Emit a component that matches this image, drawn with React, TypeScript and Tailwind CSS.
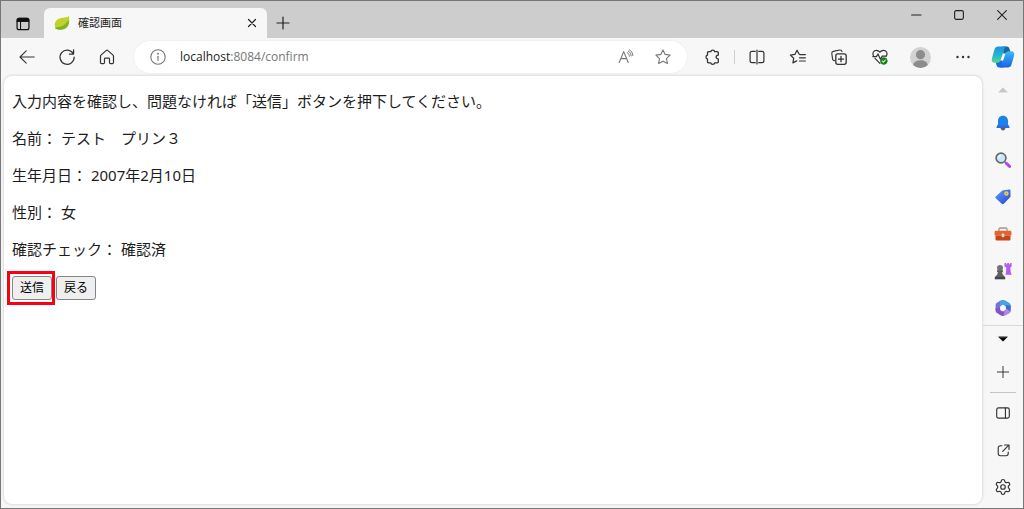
import type { ReactNode } from 'react';
import { Settings } from 'lucide-react';

interface IconProps {
    children: ReactNode;
    size?: string;
}

interface ToolButtonProps {
    label: string;
    children: ReactNode;
}

type Field = {
    label: string;
    value: string;
};

const FIELDS: Field[] = [
    { label: '名前', value: 'テスト　プリン３' },
    { label: '生年月日', value: '2007年2月10日' },
    { label: '性別', value: '女' },
    { label: '確認チェック', value: '確認済' },
];

function Icon({ children, size = 'size-4' }: IconProps) {
    return (
        <svg
            viewBox="0 0 16 16"
            className={`${size} shrink-0 overflow-visible`}
            fill="none"
            stroke="currentColor"
            strokeWidth="1.1"
            strokeLinecap="round"
            strokeLinejoin="round"
            aria-hidden="true"
        >
            {children}
        </svg>
    );
}

function NavButton({ label, children }: ToolButtonProps) {
    return (
        <button type="button" aria-label={label} className="flex h-8 w-10 shrink-0 items-center justify-center">
            {children}
        </button>
    );
}

function ToolButton({ label, children }: ToolButtonProps) {
    return (
        <button type="button" aria-label={label} className="flex h-8 w-[41px] shrink-0 items-center justify-center">
            {children}
        </button>
    );
}

function SideButton({ label, children }: ToolButtonProps) {
    return (
        <button type="button" aria-label={label} className="flex size-7 shrink-0 items-center justify-center">
            {children}
        </button>
    );
}

function WindowButton({ label, children }: ToolButtonProps) {
    return (
        <button type="button" aria-label={label} className="flex h-7 w-[43px] items-center justify-center text-[#222]">
            {children}
        </button>
    );
}

function LeafIcon() {
    return (
        <svg viewBox="0 0 16 16" className="size-4 shrink-0" aria-hidden="true">
            <path d="M14.9 1c-1.8 1.7-4.6 1.3-7.7 2C3 4 .4 6.9.8 10.5c.2 2 1.5 3.700 3.5 4 3 .5 7.800-.4 9.600-4 1.500-3 1.600-6.500 1-9.500z" fill="#bfd32a" />
            <path d="M15.200 5c.1 2.500-.4 5-2 7.100-2.100 2.700-6.300 3.200-9.400 2.300-1-.3-1.800-.8-2.300-1.500 5.500.2 10.700-2 13.700-7.900z" fill="#7fb42c" />
            <path d="M1 13.200c5.500-.2 10-2 13-7.200" fill="none" stroke="#5f9a22" strokeWidth=".7" />
        </svg>
    );
}

function TitleBar() {
    return (
        <header className="flex h-[37px] bg-[#cdcdcd]">
            <button type="button" aria-label="タブ操作メニュー" className="flex w-[43px] items-center justify-center pt-2 text-[#111]">
                <Icon size="size-[14px]">
                    <rect x="1.2" y="1.5" width="13.6" height="13" rx="2.2" strokeWidth="1.4" />
                    <path d="M1.5 3.6c0-1.300.8-2.100 2-2.100h9c1.200 0 2 .8 2 2v1.600h-13z" fill="currentColor" />
                    <path d="M5.2 5v9.3" strokeWidth="1.2" />
                </Icon>
            </button>
            <div className="mt-[7px] flex w-[223px] items-center rounded-t-md bg-[#f7f7f7] pr-[7px] pl-[10px]">
                <LeafIcon />
                <span className="ml-2 flex-1 truncate text-[11px] text-[#222]">確認画面</span>
                <button type="button" aria-label="タブを閉じる" className="flex size-4 items-center justify-center text-[#222]">
                    <Icon size="size-2">
                        <path d="m1 1 14 14M15 1 1 15" strokeWidth="2.4" />
                    </Icon>
                </button>
            </div>
            <button type="button" aria-label="新しいタブ" className="flex w-8 items-center justify-center pt-[7px] text-[#222]">
                <Icon size="size-3">
                    <path d="M8 0v16M0 8h16" strokeWidth="1.6" />
                </Icon>
            </button>
            <div className="ml-auto flex">
                <WindowButton label="最小化">
                    <Icon size="size-[10px]">
                        <path d="M1 8h15" strokeWidth="1.8" />
                    </Icon>
                </WindowButton>
                <WindowButton label="最大化">
                    <Icon size="size-[10px]">
                        <rect x="1" y="1" width="14" height="14" rx="2.5" strokeWidth="1.8" />
                    </Icon>
                </WindowButton>
                <WindowButton label="閉じる">
                    <Icon size="size-[10px]">
                        <path d="m1 1 14 14M15 1 1 15" strokeWidth="1.8" />
                    </Icon>
                </WindowButton>
            </div>
        </header>
    );
}

function AddressBar() {
    return (
        <div className="mr-[5px] ml-[7px] flex h-8 min-w-0 flex-1 items-center rounded-full bg-white px-4 text-[#767676] shadow-[0_0_2px_rgba(0,0,0,0.08)]">
            <Icon>
                <circle cx="8" cy="8" r="7.2" />
                <path d="M8 7.2v4.3" />
                <circle cx="8" cy="4.7" r=".4" fill="currentColor" />
            </Icon>
            <a href="#confirm" className="ml-[14px] flex-1 truncate font-['Open_Sans','Noto_Sans',sans-serif] text-[12px]">
                <span className="text-[#1b1b1b]">localhost</span>:8084/confirm
            </a>
            <div className="flex items-center gap-[21px]">
                <button type="button" aria-label="音声で読み上げる">
                    <Icon>
                        <path d="M1.2 13.500 5.700 2.600l4.500 10.900M2.900 9.600h5.600" />
                        <path d="M9.300 3.700c1.300.8 2 2 2.100 3.600M10.300 2.100c1.800 1.100 2.700 2.600 2.800 4.800M11.200.6c2.300 1.300 3.500 3.400 3.700 6" strokeWidth="1" />
                    </Icon>
                </button>
                <button type="button" aria-label="お気に入りに追加">
                    <Icon>
                        <path d="m8 .9 2.150 4.500 4.950.7-3.600 3.450.9 4.950L8 12.150 3.600 14.500l.9-4.950L.9 6.100l4.950-.7z" />
                    </Icon>
                </button>
            </div>
        </div>
    );
}

function CopilotIcon() {
    return (
        <svg viewBox="0 0 24 24" className="size-6 shrink-0" aria-hidden="true">
            <defs>
                <linearGradient id="copilotLeft" x1="0" y1="0" x2="0" y2="1">
                    <stop offset="0" stopColor="#1c93dc" />
                    <stop offset=".5" stopColor="#22b2d6" />
                    <stop offset="1" stopColor="#5bd889" />
                </linearGradient>
                <linearGradient id="copilotRight" x1="0" y1="0" x2="0" y2="1">
                    <stop offset="0" stopColor="#3cc0f5" />
                    <stop offset=".5" stopColor="#2b8bf2" />
                    <stop offset="1" stopColor="#1f62dc" />
                </linearGradient>
            </defs>
            <path d="M11.500 1.500h4.300c1.700 0 2.300 1 2.800 2.700L19.900 8.500h-7.600z" fill="#1d659f" />
            <path d="M4 15.500h7.700l.8 7H8.200c-1.700 0-2.300-1-2.800-2.700z" fill="#1c69e8" />
            <path d="M7.500 1.500h8c-1.400.4-2 1.700-2.600 3.700l-3.200 9.800c-.6 1.900-1.700 2.700-3.500 2.700H4.100c-3 0-3.900-2-3-5L3.400 4.800c.7-2.200 1.800-3.300 4.100-3.300z" fill="url(#copilotLeft)" />
            <path d="M16.500 22.500h-8c1.400-.4 2-1.700 2.600-3.700l3.200-9.800c.6-1.900 1.700-2.700 3.500-2.700h2.100c3 0 3.900 2 3 5l-2.300 7.900c-.7 2.200-1.800 3.300-4.100 3.300z" fill="url(#copilotRight)" />
        </svg>
    );
}

function Toolbar() {
    return (
        <nav aria-label="ツールバー" className="flex h-[38px] items-center bg-[#f7f7f7] pl-[6px] text-[#333]">
            <NavButton label="戻る">
                <Icon>
                    <path d="M15.200 8H1.200M7.200 1.800 1 8l6.200 6.200" />
                </Icon>
            </NavButton>
            <NavButton label="更新">
                <Icon>
                    <path d="M14.300 4.700A7.100 7.100 0 1 0 15.200 8M14.600.8v4.300h-4.300" strokeWidth="1.2" />
                </Icon>
            </NavButton>
            <NavButton label="ホーム">
                <Icon>
                    <path d="M1.500 7.300c0-.6.2-1 .7-1.400l4.900-4.300c.6-.5 1.200-.5 1.800 0l4.900 4.300c.5.400.7.800.7 1.400v6.300c0 .7-.4 1.100-1.100 1.100h-1.800c-.7 0-1.100-.4-1.100-1.100V10c0-.5-.3-.8-.8-.8H6.300c-.5 0-.8.3-.8.800v3.600c0 .7-.4 1.100-1.100 1.100H2.600c-.7 0-1.100-.4-1.100-1.100z" strokeWidth="1.2" />
                </Icon>
            </NavButton>
            <AddressBar />
            <ToolButton label="拡張機能">
                <Icon>
                    <path
                        d="M3.600 2.600h2.200c.3-2 3.600-2 3.900 0h2.500c.7 0 1.100.4 1.100 1.100v2.400c-2.900-.1-2.900 4 0 3.900v2.700c0 .7-.4 1.100-1.100 1.100H9.700c-.3 2-3.600 2-3.900 0H3.600c-.7 0-1.100-.4-1.100-1.100V10c-2-.3-2-3.600 0-3.900V3.700c0-.7.4-1.100 1.100-1.100z"
                        strokeWidth="1.3"
                    />
                </Icon>
            </ToolButton>
            <span className="mr-px ml-px h-[14px] w-px bg-[#cfcfcf]" />
            <ToolButton label="画面を分割する">
                <Icon>
                    <path d="M6.300 2.300H3c-1.200 0-1.900.7-1.900 1.900v7.600c0 1.200.7 1.900 1.900 1.900h3.300M9.700 2.300H13c1.200 0 1.900.7 1.900 1.900v7.600c0 1.200-.7 1.900-1.900 1.900H9.700M8 1v14" strokeWidth="1.2" />
                </Icon>
            </ToolButton>
            <ToolButton label="お気に入り">
                <Icon>
                    <path d="M9.400 5.100H9L7 1.200 4.900 5.400l-4.500.7 3.300 3.200-.8 4.600 3.800-2M9.900 5.600h5.500M9.500 8.800h5.900M9.500 12h5.900" strokeWidth="1.2" />
                </Icon>
            </ToolButton>
            <ToolButton label="コレクション">
                <Icon>
                    <path d="M3.500 11.600c-1.100 0-1.700-.5-1.900-1.500L.8 4.500c-.2-1.200.3-1.900 1.500-2.100L8.800 1c1.200-.2 1.900.3 2.200 1.700" />
                    <rect x="4.8" y="4.9" width="10.4" height="10.4" rx="2" strokeWidth="1.3" />
                    <path d="M10 7.500v5.200M7.400 10.100h5.200" strokeWidth="1.3" />
                </Icon>
            </ToolButton>
            <ToolButton label="ブラウザーのエッセンシャル">
                <Icon>
                    <path d="M1.500 7C-.2 4.200 1.800 1.200 4.500 1.300 6.100 1.400 7 2.100 7.900 3.200c.9-1.100 1.900-1.800 3.400-1.900 2.800-.1 4.900 2.900 3.100 5.700M3 9.400l4.900 4.900" strokeWidth="1.2" />
                    <path d="M.8 7.600h3.600L6 5l2.400 5.200 1.700-3h4" strokeWidth="1.2" />
                    <circle cx="11.8" cy="12" r="3.4" fill="#16831a" stroke="#16831a" strokeWidth=".6" />
                    <path d="m10.300 12.200 1.100 1 2-2.200" stroke="#d8f0d8" />
                </Icon>
            </ToolButton>
            <ToolButton label="プロファイル">
                <svg viewBox="0 0 22 22" className="size-[21px]" aria-hidden="true">
                    <circle cx="11" cy="11" r="11" fill="#d2d2d2" />
                    <circle cx="11" cy="8" r="4.8" fill="#8c8c8c" />
                    <path d="M3.300 18.800c.7-3.200 3.500-4.800 7.700-4.800s7 1.600 7.700 4.800A11 11 0 0 1 11 22a11 11 0 0 1-7.700-3.200z" fill="#8c8c8c" />
                </svg>
            </ToolButton>
            <ToolButton label="設定など">
                <Icon>
                    <path d="M3.500 8h.01M9 8h.01M14.500 8h.01" strokeWidth="2.4" />
                </Icon>
            </ToolButton>
            <ToolButton label="Copilot">
                <CopilotIcon />
            </ToolButton>
        </nav>
    );
}

function BellIcon() {
    return (
        <svg viewBox="0 0 16 16" className="size-4" aria-hidden="true">
            <path d="M5.500 13h5c-.3 1.600-1.200 2.400-2.500 2.400S5.800 14.600 5.500 13z" fill="#5b6068" />
            <path d="M8 .8C4.900.8 3 3 3 6v3.300L1.700 12c-.2.600 0 1 .6 1h11.400c.6 0 .8-.4.6-1L13 9.300V6C13 3 11.100.8 8 .8z" fill="#1a83ea" />
            <path d="M2.500 10.500h11l.8 1.500c.2.600 0 1-.6 1H2.300c-.6 0-.8-.4-.6-1z" fill="#2c67df" />
        </svg>
    );
}

function SearchIcon() {
    return (
        <svg viewBox="0 0 16 16" className="size-4" aria-hidden="true">
            <path d="m10 10 1.600 1.600" stroke="#777" strokeWidth="1.8" />
            <path d="m11.400 11.400 3.200 3" stroke="#b14be8" strokeWidth="3" strokeLinecap="round" />
            <circle cx="6" cy="6" r="4.9" fill="#c7e7fb" stroke="#6a6a6a" strokeWidth="1.7" />
            <path d="M3.500 5.600A3 3 0 0 1 6 3.300" fill="none" stroke="#fff" strokeWidth="1.2" />
        </svg>
    );
}

function TagIcon() {
    return (
        <svg viewBox="0 0 16 16" className="size-4" aria-hidden="true">
            <defs>
                <linearGradient id="tagFill" x1="0" y1="0" x2="1" y2="1">
                    <stop offset="0" stopColor="#5ba4f5" />
                    <stop offset="1" stopColor="#2b3fd6" />
                </linearGradient>
            </defs>
            <path d="M8.500 1.200 14 .5c1-.1 1.500.4 1.500 1.400v5c0 .7-.2 1.100-.7 1.600l-5.700 6c-.9.900-1.700.9-2.600 0L1 9.600C.1 8.700.1 8 1 7.200l5.800-5.300c.5-.4 1-.6 1.700-.7z" fill="url(#tagFill)" />
            <circle cx="11.4" cy="4.6" r="1.6" fill="#8ea69a" stroke="#f4cf48" strokeWidth="1.3" />
        </svg>
    );
}

function ToolboxIcon() {
    return (
        <svg viewBox="0 0 18 16" className="h-4 w-[18px]" aria-hidden="true">
            <path d="M5 5V3.200c0-.8.5-1.200 1.200-1.200h5.600c.7 0 1.200.4 1.200 1.200V5" fill="none" stroke="#9a9a9a" strokeWidth="1.3" />
            <rect x=".6" y="4.8" width="16.8" height="4.8" rx="1.2" fill="#e6652d" />
            <path d="M1.500 9.500h15v3.700c0 .8-.5 1.300-1.300 1.300H2.800c-.8 0-1.300-.5-1.300-1.300z" fill="#c8451a" />
            <rect x="7.7" y="7.5" width="2.6" height="3.7" rx=".8" fill="#dedede" />
        </svg>
    );
}

function GamesIcon() {
    return (
        <svg viewBox="0 0 18 18" className="size-[18px]" aria-hidden="true">
            <path d="M10.500 1h1.600v1.200h1.100V1h1.800v1.200h1.100V1h1.500v3.500l-1.300 1 .5 5.200 1 2.100h-6.500l.7-2.100.3-5.200-1.800-1z" fill="#b45cf0" />
            <circle cx="6" cy="6" r="3" fill="#747474" />
            <path d="M3 8.300h6V10H8.200c0 2.200.8 3.200 2.600 4.400v2.300H1.200v-2.300C3 13.200 3.800 12.200 3.800 10H3z" fill="#5f5f5f" />
            <path d="M.8 15h10.400v2.300H.8z" fill="#454545" />
        </svg>
    );
}

function OfficeIcon() {
    return (
        <svg viewBox="0 0 18 18" className="size-[18px]" aria-hidden="true">
            <path d="M6.300 1.800 9.800.9 12 4.900 8 6 5.800 8.900 5.500 12 1.600 11.500V6.300c0-1.200.4-1.900 1.400-2.500z" fill="#7471dc" />
            <path d="M9 .9c.8 0 1.400.2 2.200.7l3.800 2.200c1.200.7 1.700 1.500 1.700 2.800v3.200L11.900 8.700 9.200 6 6 6.900V3.200C6 1.800 7.500.9 9 .9z" fill="#43a5e6" />
            <path d="m11.800 6.200 4.900.4v5c0 1.100-.5 1.900-1.400 2.500l-3.700 2.200-2.300-3.900 2.700-2.600z" fill="#4169cf" />
            <path d="m12 9.600 4.500 2.800c-.2.700-.6 1.300-1.300 1.700l-4.100 2.400c-1.400.8-2.800.8-4.200 0L5 15.300 7.500 11.500l2.300.5z" fill="#b287e6" />
            <path d="M1.600 9.200 6 8.800l1 3.400 3.400.2-.7 4.300c-1 .2-1.900 0-2.800-.5l-3.900-2.300c-1-.6-1.400-1.300-1.400-2.500z" fill="#8354c8" />
            <path d="m9 5.800 2.800 1.600v3.200L9 12.200l-2.800-1.600V7.400z" fill="#f7f7f7" />
        </svg>
    );
}

function Sidebar() {
    return (
        <aside aria-label="サイドバー" className="flex w-10 shrink-0 flex-col items-center text-[#333]">
            <div className="flex flex-col items-center gap-[9px] pb-[3px]">
                <button type="button" aria-label="上へスクロール" className="-mb-1 flex h-7 items-center justify-center text-[#c6c6c6]">
                    <Icon size="size-[10px]">
                        <path d="m1.500 11 6.500-6.500 6.500 6.500z" fill="currentColor" />
                    </Icon>
                </button>
                <SideButton label="通知"><BellIcon /></SideButton>
                <SideButton label="検索"><SearchIcon /></SideButton>
                <SideButton label="ショッピング"><TagIcon /></SideButton>
                <SideButton label="ツール"><ToolboxIcon /></SideButton>
                <SideButton label="ゲーム"><GamesIcon /></SideButton>
                <SideButton label="Microsoft 365"><OfficeIcon /></SideButton>
            </div>
            <div className="flex w-full flex-col items-center border-t border-[#d8d8d8]">
                <button type="button" aria-label="下へスクロール" className="flex h-[26px] items-center justify-center text-black">
                    <Icon size="size-[10px]">
                        <path d="m1.500 5 6.500 6.500L14.500 5z" fill="currentColor" />
                    </Icon>
                </button>
                <button type="button" aria-label="カスタマイズ" className="flex h-10 items-center justify-center">
                    <Icon size="size-3">
                        <path d="M8 .5v15M.5 8h15" strokeWidth="1.3" />
                    </Icon>
                </button>
                <span className="h-px w-[26px] bg-[#c4c4c4]" />
            </div>
            <div className="mt-auto flex flex-col gap-[9px] pb-[7px]">
                <SideButton label="サイドバーを非表示">
                    <Icon size="size-[14px]">
                        <rect x=".8" y="2.2" width="14.4" height="11.6" rx="2" strokeWidth="1.3" />
                        <path d="M10.800 2.500v11" strokeWidth="1.3" />
                    </Icon>
                </SideButton>
                <SideButton label="外部で開く">
                    <Icon size="size-[13px]">
                        <path d="M6 2.200H4.200c-1.700 0-2.700 1-2.700 2.700v6.900c0 1.700 1 2.700 2.700 2.700h6.900c1.700 0 2.700-1 2.700-2.700V10M9.300 1.200h5.500v5.500M14.500 1.500 7 9" strokeWidth="1.4" />
                    </Icon>
                </SideButton>
                <SideButton label="設定">
                    <Settings className="size-[18px]" strokeWidth={1.6} />
                </SideButton>
            </div>
        </aside>
    );
}

const BUTTON_CLASS =
    'h-6 rounded-[3px] border border-[#858585] bg-[#efefef] px-[7px] text-[12px] leading-5 text-black';

function ConfirmPage() {
    return (
        <main className="mr-px mb-1 ml-[3px] min-w-0 flex-1 rounded-lg bg-white px-2 pt-[14px] text-[15px] leading-[22px] text-[#1c1c1c] shadow-[0_0_3px_rgba(0,0,0,0.22)]">
            <form onSubmit={(e) => e.preventDefault()}>
                <div className="flex flex-col gap-[15px]">
                    <p>入力内容を確認し、問題なければ「送信」ボタンを押下してください。</p>
                    {FIELDS.map((field) => (
                        <p key={field.label}>
                            {field.label}： {field.value}
                        </p>
                    ))}
                </div>
                <div className="mt-4 flex gap-1">
                    <div className="relative flex">
                        <button type="submit" className={BUTTON_CLASS}>送信</button>
                        <span className="pointer-events-none absolute -inset-y-[5px] -right-[3px] -left-[5px] border-[3px] border-[#fa0010]" />
                    </div>
                    <button type="button" className={BUTTON_CLASS}>戻る</button>
                </div>
            </form>
        </main>
    );
}

export default function App() {
    return (
        <div className="flex min-h-screen flex-col border border-[#777] bg-[#f7f7f7] font-['Noto_Sans','Noto_Sans_CJK_JP',sans-serif]">
            <TitleBar />
            <Toolbar />
            <div className="flex flex-1">
                <ConfirmPage />
                <Sidebar />
            </div>
        </div>
    );
}
